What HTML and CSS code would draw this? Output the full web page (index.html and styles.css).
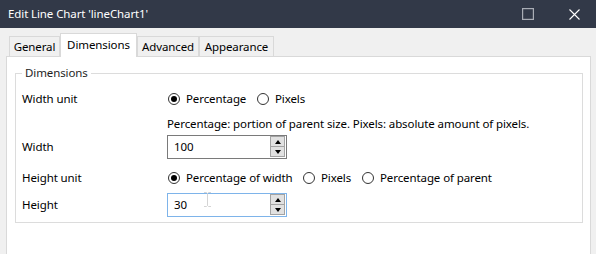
FILE: index.html
```html
<!DOCTYPE html>
<html lang="en">
<head>
  <meta charset="UTF-8">
  <title>Edit Line Chart</title>
  <link rel="stylesheet" href="styles.css">
</head>
<body>
  <div class="window">
    <div class="titlebar">
      <span class="title">Edit Line Chart 'lineChart1'</span>
      <div class="caption">
        <svg class="cap-max" width="12" height="12" viewBox="0 0 12 12">
          <rect x="0.5" y="0.5" width="11" height="11" fill="none" stroke="#a9adb5" stroke-width="1.4"/>
        </svg>
        <svg class="cap-close" width="11" height="11" viewBox="0 0 11 11">
          <path d="M0.5 0.5 L10.5 10.5 M10.5 0.5 L0.5 10.5" stroke="#ffffff" stroke-width="1.1"/>
        </svg>
      </div>
    </div>

    <div class="client">
      <div class="tabs">
        <div class="tab tab-general">General</div>
        <div class="tab tab-dimensions active">Dimensions</div>
        <div class="tab tab-advanced">Advanced</div>
        <div class="tab tab-appearance">Appearance</div>
      </div>

      <div class="tab-page">
        <fieldset class="group">
          <legend>Dimensions</legend>

          <div class="row row-unit first">
            <div class="label">Width unit</div>
            <div class="options">
              <label class="option opt-pct"><span class="mark checked"></span>Percentage</label>
              <label class="option"><span class="mark"></span>Pixels</label>
            </div>
          </div>

          <div class="row row-hint">
            <div class="label"></div>
            <div class="hint">Percentage: portion of parent size. Pixels: absolute amount of pixels.</div>
          </div>

          <div class="row row-field">
            <div class="label">Width</div>
            <div class="spin">
              <div class="value">100</div>
              <div class="spin-buttons">
                <div class="spin-btn up"></div>
                <div class="spin-btn down"></div>
              </div>
            </div>
          </div>

          <div class="row row-unit second">
            <div class="label">Height unit</div>
            <div class="options">
              <label class="option opt-pct-width"><span class="mark checked"></span>Percentage of width</label>
              <label class="option opt-px"><span class="mark"></span>Pixels</label>
              <label class="option"><span class="mark"></span>Percentage of parent</label>
            </div>
          </div>

          <div class="row row-field last">
            <div class="label">Height</div>
            <div class="spin focus">
              <div class="value">30</div>
              <div class="spin-buttons">
                <div class="spin-btn up"></div>
                <div class="spin-btn down"></div>
              </div>
            </div>
          </div>

          <!-- mouse cursor over the form -->
          <svg class="ibeam" width="7" height="15" viewBox="0 0 7 15">
            <path d="M0 0.5 H2.5 L3.5 1.5 L4.5 0.5 H7 M3.5 1.5 V13.5 M0 14.5 H2.5 L3.5 13.5 L4.5 14.5 H7" fill="none" stroke="#d4d4d4" stroke-width="1"/>
          </svg>
        </fieldset>
      </div>
    </div>
  </div>
</body>
</html>
```

FILE: styles.css
```css
body {
  margin: 0;
  font-family: "Noto Sans", "Liberation Sans", sans-serif;
  font-size: 11.5px;
  letter-spacing: -0.1px;
  color: #000;
  background-color: #f0f0f0;
}

.window {
  width: 596px;
  height: 254px;
  overflow: hidden;
  background-color: #f0f0f0;
}

/* title bar */
.titlebar {
  height: 28px;
  background-color: #323948;
  display: flex;
  align-items: center;
  padding-left: 8px;
  color: #fff;
}

.title {
  line-height: 16px;
  margin-top: -1px;
}

.caption {
  margin-left: auto;
  display: flex;
  align-items: center;
}

.cap-max {
  margin-right: 35px;
}

.cap-close {
  margin-right: 16px;
}

/* tabs */
.client {
  padding: 5px 5px 0 6px;
}

.tabs {
  height: 23px;
  display: flex;
  align-items: flex-end;
  padding-left: 3px;
}

.tab {
  height: 20px;
  box-sizing: border-box;
  border: 1px solid #d9d9d9;
  border-bottom: none;
  text-align: center;
  line-height: 19px;
  background-color: #f0f0f0;
}

.tab-general {
  width: 51px;
}

.tab-dimensions {
  width: 77px;
}

.tab-advanced {
  width: 62px;
}

.tab-appearance {
  width: 75px;
}

.tab.active {
  height: 24px;
  margin-bottom: -1px;
  line-height: 21px;
  background-color: #fff;
  position: relative;
  z-index: 1;
}

.tab-page {
  height: 210px;
  background-color: #fff;
  border: 1px solid #d9d9d9;
  padding-top: 8px;
}

/* group box */
.group {
  position: relative;
  margin: 0 7px 0 8px;
  padding: 0 6px 5px 6px;
  border: 1px solid #dcdcdc;
}

.group legend {
  padding: 0 3px;
  line-height: 16px;
  color: #1e1e1e;
}

.row {
  display: flex;
  align-items: center;
}

.label {
  width: 145px;
  flex-shrink: 0;
  line-height: 16px;
}

.row-unit {
  height: 20px;
}

.row-unit.first {
  margin-top: 8px;
}

.row-unit.second {
  margin-top: 9px;
}

.row-hint {
  height: 26px;
  padding-top: 2px;
  box-sizing: border-box;
}

.row-field {
  height: 24px;
}

.row-field.last {
  margin-top: 5px;
}

/* radio buttons */
.options {
  display: flex;
  align-items: center;
}

.option {
  display: flex;
  align-items: center;
  line-height: 16px;
}

.opt-pct {
  width: 89px;
}

.opt-pct-width {
  width: 135px;
}

.opt-px {
  width: 59px;
}

.mark {
  width: 12px;
  height: 12px;
  box-sizing: border-box;
  border: 1px solid #333;
  border-radius: 50%;
  margin: 0 6px 0 1px;
  background: #fff;
  display: flex;
  align-items: center;
  justify-content: center;
}

.mark.checked::after {
  content: "";
  width: 6px;
  height: 6px;
  border-radius: 50%;
  background: #000;
}

/* numeric up down */
.spin {
  width: 120px;
  height: 24px;
  box-sizing: border-box;
  border: 1px solid #7a7a7a;
  background: #fff;
  display: flex;
}

.spin.focus {
  border-color: #7eb4ea;
}

.spin .value {
  flex: 1;
  padding-left: 6px;
  line-height: 22px;
}

.spin-buttons {
  width: 15px;
  display: flex;
  flex-direction: column;
  margin: 0 1px 1px 0;
}

.spin-btn {
  flex: 1;
  box-sizing: border-box;
  border: 1px solid #a3a3a3;
  background: #e1e1e1;
  display: flex;
  align-items: center;
  justify-content: center;
}

.spin-btn.down {
  border-top: none;
}

.spin-btn::after {
  content: "";
  width: 0;
  height: 0;
  border-left: 3px solid transparent;
  border-right: 3px solid transparent;
}

.spin-btn.up::after {
  border-bottom: 4px solid #000;
}

.spin-btn.down::after {
  border-top: 4px solid #000;
}

.ibeam {
  position: absolute;
  left: 188px;
  top: 111px;
}
```
